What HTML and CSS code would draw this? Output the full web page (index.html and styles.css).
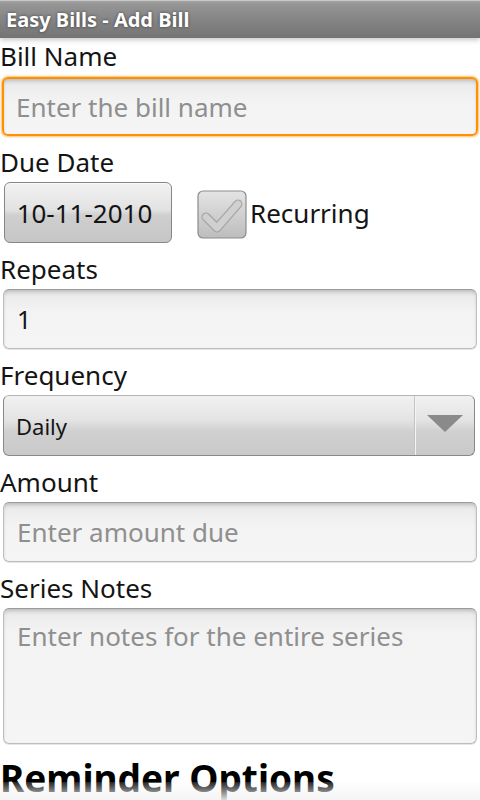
FILE: index.html
```html
<!DOCTYPE html>
<html>
<head>
<meta charset="utf-8">
<link rel="stylesheet" href="styles.css">
</head>
<body>
<div class="screen">
  <div class="titlebar">Easy Bills - Add Bill</div>
  <div class="content">
    <label class="label first">Bill Name</label>
    <div class="field focused"><span class="placeholder">Enter the bill name</span></div>

    <label class="label">Due Date</label>
    <div class="date-row">
      <div class="button">10-11-2010</div>
      <div class="check">
        <svg class="checkbox" width="50" height="49" viewBox="0 0 50 49">
          <defs>
            <linearGradient id="cbg" x1="0" y1="0" x2="0" y2="1">
              <stop offset="0" stop-color="#e4e4e4"/>
              <stop offset="1" stop-color="#bdbdbd"/>
            </linearGradient>
          </defs>
          <rect x="1" y="1" width="48" height="47" rx="5" fill="url(#cbg)" stroke="#8c8c8c" stroke-width="1.2"/>
          <path d="M9 27 L20 38 L41 14" fill="none" stroke="#a6a6a6" stroke-width="9" stroke-linecap="round" stroke-linejoin="round"/>
          <path d="M9 27 L20 38 L41 14" fill="none" stroke="#d0d0d0" stroke-width="6.5" stroke-linecap="round" stroke-linejoin="round"/>
        </svg>
        <span class="check-label">Recurring</span>
      </div>
    </div>

    <label class="label">Repeats</label>
    <div class="field"><span class="value">1</span></div>

    <label class="label">Frequency</label>
    <div class="spinner">
      <span class="spinner-value">Daily</span>
      <span class="spinner-arrow">
        <svg width="36" height="19" viewBox="0 0 36 19"><path d="M0 1 L36 1 L18 18 Z" fill="#8a8a8a"/></svg>
      </span>
    </div>

    <label class="label">Amount</label>
    <div class="field"><span class="placeholder">Enter amount due</span></div>

    <label class="label">Series Notes</label>
    <div class="field notes"><span class="placeholder">Enter notes for the entire series</span></div>

    <h2 class="section">Reminder Options</h2>
  </div>
  <div class="fade"></div>
</div>
</body>
</html>
```
FILE: styles.css
```css
html, body {
  margin: 0;
  padding: 0;
  background: #ffffff;
}
body {
  font-family: "Noto Sans", "Open Sans", sans-serif;
  color: #111;
}
.screen {
  position: relative;
  width: 480px;
  height: 800px;
  overflow: hidden;
  background: #fff;
}
.titlebar {
  height: 38px;
  box-sizing: border-box;
  padding-left: 6px;
  display: flex;
  align-items: center;
  font-size: 20px;
  font-weight: bold;
  color: #fff;
  text-shadow: 0 0 3px rgba(0,0,0,0.55);
  background: linear-gradient(#a3a3a3 0px, #969696 3px, #838383 20px, #747474 37px, #5e5e5e 38px);
  border-top: 1px solid #c8c8c8;
  box-shadow: 0 2px 5px rgba(0,0,0,0.22);
  position: relative;
  z-index: 1;
}
.content {
  display: flex;
  flex-direction: column;
}
.label {
  display: block;
  font-size: 26px;
  line-height: 30px;
  margin: 11px 0 5px 0;
  color: #141414;
}
.label.first {
  margin-top: 3px;
  margin-bottom: 6px;
}
.field {
  margin: 0 3px 0 3px;
  height: 60px;
  box-sizing: border-box;
  border: 1px solid #bdbdbd;
  border-top-color: #9a9a9a;
  border-radius: 6px;
  background: linear-gradient(#dcdcdc 0px, #ececec 7px, #f3f3f3 22px, #f5f5f5 100%);
  box-shadow: inset 0 2px 3px rgba(0,0,0,0.12), 0 1px 0 #e6e6e6;
  display: flex;
  align-items: center;
  padding-left: 13px;
  font-size: 26px;
}
.field.focused {
  margin: 0 2px;
  height: 59px;
  border: 2px solid #ff9000;
  box-shadow: 0 0 2px 1px rgba(255,140,0,0.55), inset 0 2px 3px rgba(0,0,0,0.12);
  padding-left: 12px;
}
.field.notes {
  height: 136px;
  align-items: flex-start;
  padding-top: 9px;
}
.placeholder {
  color: #8f8f8f;
}
.value {
  color: #151515;
  font-size: 25px;
}
.date-row {
  display: flex;
  align-items: center;
  height: 61px;
}
.button {
  margin-left: 4px;
  width: 168px;
  height: 61px;
  box-sizing: border-box;
  border: 1px solid #868686;
  border-radius: 6px;
  background: linear-gradient(#f2f2f2 0%, #e2e2e2 45%, #cfcfcf 55%, #c6c6c6 100%);
  box-shadow: inset 0 1px 0 #fafafa;
  display: flex;
  align-items: center;
  justify-content: center;
  padding-right: 7px;
  font-size: 26px;
  color: #141414;
}
.check {
  display: flex;
  align-items: center;
  margin-left: 25px;
  margin-top: 4px;
}
.checkbox {
  display: block;
}
.check-label {
  font-size: 26px;
  margin-left: 3px;
  margin-top: -3px;
  color: #141414;
}
.spinner {
  margin: 0 5px 0 3px;
  height: 61px;
  box-sizing: border-box;
  border: 1px solid #888;
  border-top-color: #b5b5b5;
  border-radius: 6px;
  background: linear-gradient(#f1f1f1 0%, #e4e4e4 40%, #d0d0d0 60%, #c9c9c9 100%);
  display: flex;
  align-items: center;
}
.spinner-value {
  flex: 1;
  padding-left: 12px;
  font-size: 22px;
  color: #141414;
}
.spinner-arrow {
  width: 60px;
  align-self: stretch;
  display: flex;
  align-items: center;
  justify-content: center;
  border-left: 1px solid #c4c4c4;
  box-shadow: inset 1px 0 0 #f4f4f4;
  padding-bottom: 4px;
  box-sizing: border-box;
}
.spinner-arrow svg {
  display: block;
}
.section {
  margin: 14px 0 0 0;
  font-size: 37px;
  line-height: 40px;
  font-weight: bold;
  color: #000;
}
.fade {
  position: absolute;
  left: 0;
  right: 0;
  bottom: 0;
  height: 18px;
  background: linear-gradient(rgba(244,244,244,0.15), rgba(244,244,244,0.9));
}
```
